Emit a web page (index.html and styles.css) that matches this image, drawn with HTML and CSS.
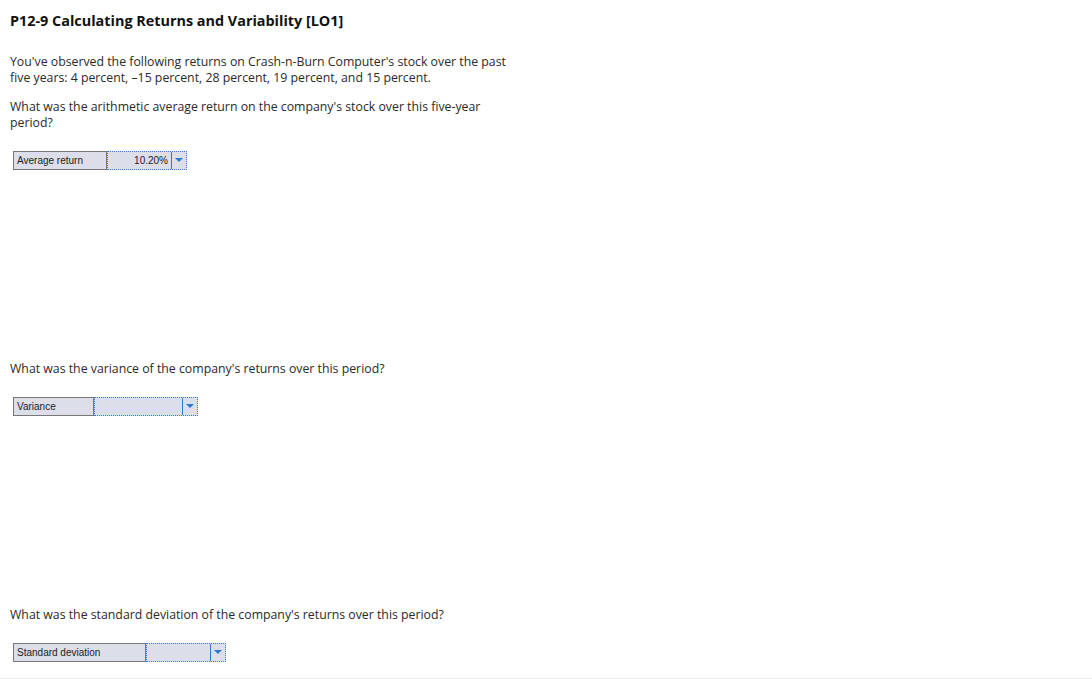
FILE: index.html
```html
<!DOCTYPE html>
<html lang="en">

<head>
  <meta charset="UTF-8" />
  <title>P12-9 Calculating Returns and Variability</title>
  <link rel="stylesheet" href="styles.css">
</head>

<body>

  <div class="soal">
    <h1>P12-9 Calculating Returns and Variability [LO1]</h1>

    <p class="intro">
      You've observed the following returns on Crash-n-Burn Computer's stock over the past
      five years: 4 percent, &ndash;15 percent, 28 percent, 19 percent, and 15 percent.
    </p>

    <!-- bagian a -->
    <div class="bagian">
      <p>What was the arithmetic average return on the company's stock over this five-year period?</p>
      <div class="jawaban">
        <span class="label label-avg">Average return</span>
        <span class="isian isian-avg">
          <span class="nilai">10.20%</span>
          <span class="dropdown"></span>
        </span>
      </div>
    </div>

    <!-- bagian b -->
    <div class="bagian">
      <p>What was the variance of the company's returns over this period?</p>
      <div class="jawaban">
        <span class="label label-var">Variance</span>
        <span class="isian isian-var">
          <span class="nilai"></span>
          <span class="dropdown"></span>
        </span>
      </div>
    </div>

    <!-- bagian c -->
    <div class="bagian">
      <p>What was the standard deviation of the company's returns over this period?</p>
      <div class="jawaban">
        <span class="label label-sd">Standard deviation</span>
        <span class="isian isian-sd">
          <span class="nilai"></span>
          <span class="dropdown"></span>
        </span>
      </div>
    </div>
  </div>

  <div class="garis"></div>

</body>

</html>
```

FILE: styles.css
```css
body {
  margin: 0;
  font-family: 'Open Sans', sans-serif;
  color: #2a2a2a;
  background: white;
}

.soal {
  padding: 12px 10px 0;
  height: 666px;
}

h1 {
  font-size: 14.4px;
  font-weight: bold;
  margin: 0;
  line-height: 18px;
  color: #111;
}

p {
  font-size: 12.3px;
  line-height: 16px;
  margin: 0;
  max-width: 500px;
}

.intro {
  margin-top: 24px;
}

.bagian p {
  margin-top: 13px;
}

.bagian+.bagian p {
  margin-top: 191px;
}

.bagian .jawaban {
  margin-top: 20px;
}

.bagian+.bagian .jawaban {
  margin-top: 20px;
}

.jawaban {
  display: flex;
  margin-left: 3px;
  height: 19px;
  font-family: 'Liberation Sans', Arial, sans-serif;
  font-size: 10px;
  color: #222;
}

.label {
  background-color: #dcdeea;
  border: 1px solid #777;
  padding: 0 3px;
  line-height: 17px;
  box-sizing: border-box;
}

.isian {
  display: flex;
  background-color: #dcdeea;
  border: 1px dotted #2f7ad1;
  box-sizing: border-box;
  align-items: stretch;
}

.nilai {
  flex: 1;
  text-align: right;
  padding-right: 3px;
  line-height: 17px;
  border-right: 1px solid #2f7ad1;
}

.dropdown {
  width: 14px;
  position: relative;
}

.dropdown::after {
  content: "";
  position: absolute;
  top: 6px;
  left: 3px;
  border-left: 4px solid transparent;
  border-right: 4px solid transparent;
  border-top: 4px solid #2f7ad1;
}

.label-avg {
  width: 94px;
}

.isian-avg {
  width: 80px;
}

.label-var {
  width: 81px;
}

.isian-var {
  width: 104px;
}

.label-sd {
  width: 133px;
}

.isian-sd {
  width: 80px;
}

.garis {
  border-top: 1px solid #ececec;
}
```
